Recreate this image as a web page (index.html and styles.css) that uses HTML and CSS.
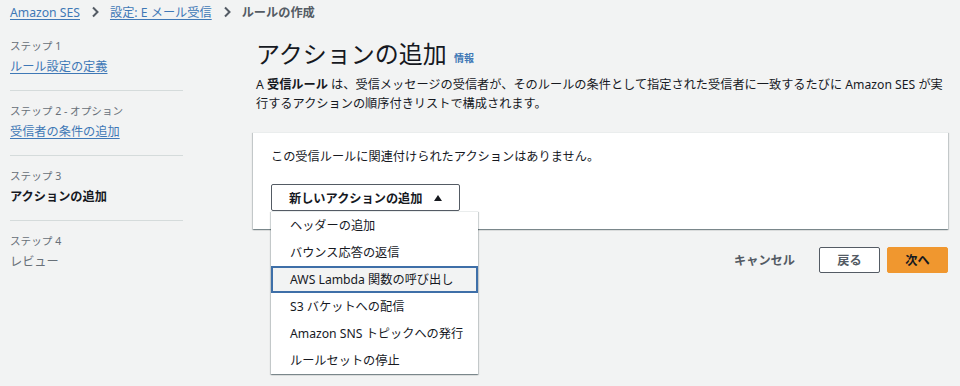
FILE: index.html
```html
<!DOCTYPE html>
<html lang="ja">
<head>
<meta charset="utf-8">
<link rel="stylesheet" href="styles.css">
</head>
<body>
<nav class="breadcrumb">
  <a class="crumb-link" href="#">Amazon SES</a>
  <svg class="chev" width="10" height="12" viewBox="0 0 10 12"><path d="M3 1.5 L7.5 6 L3 10.5" fill="none" stroke="#545b64" stroke-width="2"/></svg>
  <a class="crumb-link" href="#">設定: E メール受信</a>
  <svg class="chev" width="10" height="12" viewBox="0 0 10 12"><path d="M3 1.5 L7.5 6 L3 10.5" fill="none" stroke="#545b64" stroke-width="2"/></svg>
  <span class="crumb-current">ルールの作成</span>
</nav>
<div class="layout">
  <aside class="sidebar">
    <div class="step">
      <div class="step-label">ステップ 1</div>
      <a class="step-link" href="#">ルール設定の定義</a>
    </div>
    <div class="step">
      <div class="step-label">ステップ 2 - オプション</div>
      <a class="step-link" href="#">受信者の条件の追加</a>
    </div>
    <div class="step">
      <div class="step-label">ステップ 3</div>
      <div class="step-active">アクションの追加</div>
    </div>
    <div class="step last">
      <div class="step-label">ステップ 4</div>
      <div class="step-disabled">レビュー</div>
    </div>
  </aside>
  <main class="main">
    <h1 class="title">アクションの追加 <a class="info" href="#">情報</a></h1>
    <p class="desc">A <b>受信ルール</b> は、受信メッセージの受信者が、そのルールの条件として指定された受信者に一致するたびに Amazon SES が実行するアクションの順序付きリストで構成されます。</p>
    <section class="card">
      <p class="empty">この受信ルールに関連付けられたアクションはありません。</p>
      <div class="dd-wrap">
        <button class="dd-btn"><span>新しいアクションの追加</span><svg class="caret" width="10" height="8" viewBox="0 0 10 8"><path d="M1 7 L5 1 L9 7 Z" fill="#16191f"/></svg></button>
        <ul class="menu">
          <li class="item">ヘッダーの追加</li>
          <li class="item">バウンス応答の返信</li>
          <li class="item hl">AWS Lambda 関数の呼び出し</li>
          <li class="item">S3 バケットへの配信</li>
          <li class="item">Amazon SNS トピックへの発行</li>
          <li class="item">ルールセットの停止</li>
        </ul>
      </div>
    </section>
    <div class="actions">
      <button class="btn-text">キャンセル</button>
      <button class="btn-normal">戻る</button>
      <button class="btn-primary">次へ</button>
    </div>
  </main>
</div>
</body>
</html>
```
FILE: styles.css
```css
* { box-sizing: border-box; }
html, body { margin: 0; padding: 0; }
body {
  background: #f2f3f3;
  font-family: "Noto Sans", "Noto Sans CJK JP", sans-serif;
  font-size: 12.2px;
  color: #16191f;
  width: 960px;
  height: 386px;
  overflow: hidden;
}
a { color: #3f78b6; }
.breadcrumb {
  height: 24px;
  display: flex;
  align-items: center;
  padding: 0 10px;
  gap: 9px;
}
.crumb-link { text-decoration: underline; text-underline-offset: 2px; }
.chev { display: block; margin: 0 1px; }
.crumb-current { color: #545b64; font-weight: 700; }
.layout {
  display: flex;
  padding: 0 12px 0 10px;
}
.sidebar { width: 173px; flex: none; }
.step {
  padding: 12px 0 13px;
  border-bottom: 1px solid #d5dbdb;
}
.step:first-child { padding-top: 14px; }
.step.last { border-bottom: none; }
.step-label {
  font-size: 10.6px;
  line-height: 17px;
  color: #687078;
  margin-bottom: 2px;
}
.step-link, .step-active, .step-disabled {
  display: inline-block;
  line-height: 20px;
}
.step-link { text-decoration: underline; text-underline-offset: 2px; }
.step-active { font-weight: 700; }
.step-disabled { color: #687078; }
.main {
  margin-left: 72px;
  width: 693px;
  padding-top: 14px;
}
.title {
  margin: 0;
  font-size: 24px;
  font-weight: 400;
  line-height: 32px;
  margin-left: 1px;
}
.info {
  font-size: 10px;
  font-weight: 700;
  text-decoration: none;
  vertical-align: 1px;
  margin-left: 1px;
}
.desc {
  margin: 1px 0 0 1px;
  line-height: 19px;
}
.card {
  margin-top: 19px;
  margin-left: -2px;
  background: #fff;
  padding: 14px 20px 18px 18px;
  box-shadow: 0 1px 1px 0 rgba(0,28,36,.3), 1px 1px 1px 0 rgba(0,28,36,.15), -1px 1px 1px 0 rgba(0,28,36,.15);
  border-top: 1px solid #eaeded;
}
.empty { margin: 0; line-height: 20px; }
.dd-wrap { position: relative; margin-top: 17px; }
.dd-btn {
  font: inherit;
  font-weight: 700;
  height: 27px;
  width: 189px;
  background: #fff;
  border: 1px solid #545b64;
  border-radius: 2px;
  color: #16191f;
  padding: 0 12px 0 17px;
  display: flex;
  align-items: center;
  white-space: nowrap;
}
.caret { display: block; margin-left: 11px; }
.menu {
  position: absolute;
  top: 27px;
  left: 0;
  width: 207px;
  margin: 0;
  padding: 0;
  list-style: none;
  background: #fff;
  box-shadow: 0 1px 1px 0 rgba(0,28,36,.3), 1px 1px 1px 0 rgba(0,28,36,.15), -1px 1px 1px 0 rgba(0,28,36,.15);
  border-top: 1px solid #eaeded;
  z-index: 2;
}
.item {
  height: 27px;
  line-height: 25px;
  padding: 0 18px;
  border: 1px solid transparent;
  white-space: nowrap;
}
.item.hl {
  border: 2px solid #3e6fa8;
  background: #f2f3f3;
  padding: 0 17px;
  line-height: 23px;
}
.actions {
  display: flex;
  justify-content: flex-end;
  align-items: center;
  margin-top: 18px;
  gap: 7px;
}
.actions button {
  font: inherit;
  font-weight: 700;
  height: 26px;
  border-radius: 2px;
  white-space: nowrap;
}
.btn-text {
  background: none;
  border: 1px solid transparent;
  color: #545b64;
  padding: 0 16px;
}
.btn-normal {
  width: 61px;
  background: #fff;
  border: 1px solid #545b64;
  color: #545b64;
}
.btn-primary {
  width: 61px;
  background: #f0972f;
  border: 1px solid #f0972f;
  color: #16191f;
}
```
